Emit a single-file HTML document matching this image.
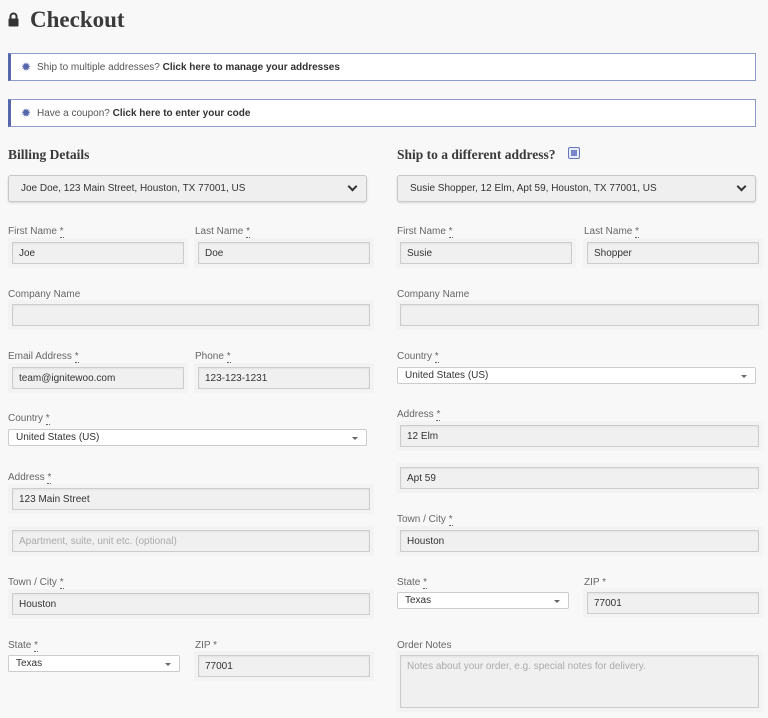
<!DOCTYPE html>
<html><head><meta charset="utf-8"><style>
*{box-sizing:border-box;margin:0;padding:0}
body{width:768px;height:718px;background:#f8f8f8;font-family:"Liberation Sans","DejaVu Sans",sans-serif;color:#444;position:relative;overflow:hidden}
.a{position:absolute}
h1{position:absolute;left:30px;top:7px;font-family:"Liberation Serif",serif;font-weight:bold;font-size:23px;color:#3a3a3a}
.notice{position:absolute;left:8px;width:748px;height:28px;background:#fff;border:1px solid #8c9bc8;border-left:3px solid #5566aa;font-size:10px;color:#555;padding:8px 0 0 26px}
.notice b{color:#333}
.gear{position:absolute;left:10px;top:8px;width:10px;height:10px;color:#5566aa;font-size:12px;line-height:10px}
h3{position:absolute;font-family:"Liberation Serif",serif;font-weight:bold;font-size:13.5px;color:#3a3a3a}
.sel{position:absolute;height:27px;background:#efefef;border:1px solid #c8c8c8;border-radius:3px;box-shadow:0 1px 2px rgba(0,0,0,.15);font-size:10px;color:#333;padding:7px 0 0 12px}
.chev{position:absolute;right:10px;top:7px;width:7px;height:7px;border-right:2px solid #333;border-bottom:2px solid #333;transform:rotate(45deg)}
.lbl{position:absolute;font-size:10px;color:#666}
.lbl i{font-style:normal;border-bottom:1px dotted #666}
.in{position:absolute;height:22px;background:#f0f0f0;border:1px solid #cdcdcd;box-shadow:0 0 0 4px #f3f3f3,inset 0 1px 2px rgba(0,0,0,.06);font-size:10px;color:#333;padding:5px 0 0 6px}
.ph{color:#aaa}
.dd{position:absolute;height:17px;background:#fff;border:1px solid #ccc;border-radius:2px;font-size:10px;color:#333;padding:2px 0 0 7px}
.dd:after{content:"";position:absolute;right:8px;top:7px;border:3px solid transparent;border-top:3px solid #666}
</style></head><body>
<svg class="a" style="left:8px;top:12px" width="11" height="15" viewBox="0 0 11 15"><path d="M2.5 7V4.5a3 3 0 0 1 6 0V7" fill="none" stroke="#333" stroke-width="2"/><rect x="0.5" y="6.5" width="10" height="8" rx="1" fill="#333"/></svg>
<h1>Checkout</h1>
<div class="notice" style="top:53px"><span class="gear">✹</span>Ship to multiple addresses? <b>Click here to manage your addresses</b></div>
<div class="notice" style="top:99px"><span class="gear">✹</span>Have a coupon? <b>Click here to enter your code</b></div>

<h3 style="left:8px;top:147px">Billing Details</h3>
<h3 style="left:397px;top:147px">Ship to a different address?</h3>
<div class="a" style="left:568px;top:147px;width:12px;height:12px;background:#e8ecf8;border:1px solid #6677bb;border-radius:2px"><div style="margin:2px;width:6px;height:6px;background:#7788cc"></div></div>

<div class="sel" style="left:8px;top:175px;width:359px">Joe Doe, 123 Main Street, Houston, TX 77001, US<span class="chev"></span></div>
<div class="sel" style="left:397px;top:175px;width:359px">Susie Shopper, 12 Elm, Apt 59, Houston, TX 77001, US<span class="chev"></span></div>

<div class="lbl" style="left:8px;top:226px">First Name <i>*</i></div>
<div class="lbl" style="left:195px;top:226px">Last Name <i>*</i></div>
<div class="in" style="left:12px;top:242px;width:172px">Joe</div>
<div class="in" style="left:198px;top:242px;width:172px">Doe</div>
<div class="lbl" style="left:8px;top:289px">Company Name</div>
<div class="in" style="left:12px;top:304px;width:358px"></div>
<div class="lbl" style="left:8px;top:351px">Email Address <i>*</i></div>
<div class="lbl" style="left:195px;top:351px">Phone <i>*</i></div>
<div class="in" style="left:12px;top:367px;width:172px">team@ignitewoo.com</div>
<div class="in" style="left:198px;top:367px;width:172px">123-123-1231</div>
<div class="lbl" style="left:8px;top:413px">Country <i>*</i></div>
<div class="dd" style="left:8px;top:429px;width:359px">United States (US)</div>
<div class="lbl" style="left:8px;top:472px">Address <i>*</i></div>
<div class="in" style="left:12px;top:488px;width:358px">123 Main Street</div>
<div class="in" style="left:12px;top:530px;width:358px"><span class="ph">Apartment, suite, unit etc. (optional)</span></div>
<div class="lbl" style="left:8px;top:577px">Town / City <i>*</i></div>
<div class="in" style="left:12px;top:593px;width:358px">Houston</div>
<div class="lbl" style="left:8px;top:640px">State <i>*</i></div>
<div class="lbl" style="left:195px;top:640px">ZIP <i>*</i></div>
<div class="dd" style="left:8px;top:655px;width:172px">Texas</div>
<div class="in" style="left:198px;top:655px;width:172px">77001</div>

<div class="lbl" style="left:397px;top:226px">First Name <i>*</i></div>
<div class="lbl" style="left:584px;top:226px">Last Name <i>*</i></div>
<div class="in" style="left:400px;top:242px;width:172px">Susie</div>
<div class="in" style="left:587px;top:242px;width:172px">Shopper</div>
<div class="lbl" style="left:397px;top:289px">Company Name</div>
<div class="in" style="left:400px;top:304px;width:359px"></div>
<div class="lbl" style="left:397px;top:351px">Country <i>*</i></div>
<div class="dd" style="left:397px;top:367px;width:359px">United States (US)</div>
<div class="lbl" style="left:397px;top:409px">Address <i>*</i></div>
<div class="in" style="left:400px;top:425px;width:359px">12 Elm</div>
<div class="in" style="left:400px;top:467px;width:359px">Apt 59</div>
<div class="lbl" style="left:397px;top:514px">Town / City <i>*</i></div>
<div class="in" style="left:400px;top:530px;width:359px">Houston</div>
<div class="lbl" style="left:397px;top:577px">State <i>*</i></div>
<div class="lbl" style="left:584px;top:577px">ZIP <i>*</i></div>
<div class="dd" style="left:397px;top:592px;width:172px">Texas</div>
<div class="in" style="left:587px;top:592px;width:172px">77001</div>
<div class="lbl" style="left:397px;top:640px">Order Notes</div>
<div class="in" style="left:400px;top:655px;width:359px;height:53px"><span class="ph">Notes about your order, e.g. special notes for delivery.</span></div>
</body></html>
